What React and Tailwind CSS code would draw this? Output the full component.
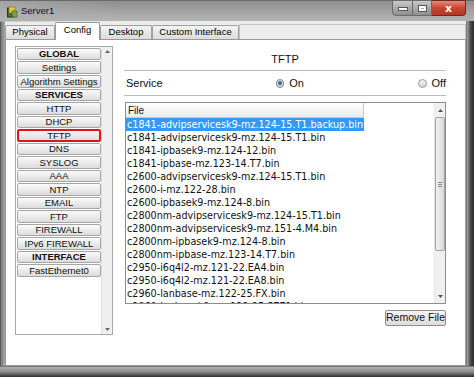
import React from "react";

const navItems = [
  { t: "GLOBAL", b: true, h: 13 },
  { t: "Settings", h: 14 },
  { t: "Algorithm Settings", h: 14 },
  { t: "SERVICES", b: true, h: 13 },
  { t: "HTTP", h: 14 },
  { t: "DHCP", h: 13 },
  { t: "TFTP", h: 14, sel: true },
  { t: "DNS", h: 13 },
  { t: "SYSLOG", h: 14 },
  { t: "AAA", h: 13 },
  { t: "NTP", h: 14 },
  { t: "EMAIL", h: 13 },
  { t: "FTP", h: 14 },
  { t: "FIREWALL", h: 13 },
  { t: "IPv6 FIREWALL", h: 14 },
  { t: "INTERFACE", b: true, h: 13 },
  { t: "FastEthernet0", h: 14 },
];

const files = [
  "c1841-advipservicesk9-mz.124-15.T1.backup.bin",
  "c1841-advipservicesk9-mz.124-15.T1.bin",
  "c1841-ipbasek9-mz.124-12.bin",
  "c1841-ipbase-mz.123-14.T7.bin",
  "c2600-advipservicesk9-mz.124-15.T1.bin",
  "c2600-i-mz.122-28.bin",
  "c2600-ipbasek9-mz.124-8.bin",
  "c2800nm-advipservicesk9-mz.124-15.T1.bin",
  "c2800nm-advipservicesk9-mz.151-4.M4.bin",
  "c2800nm-ipbasek9-mz.124-8.bin",
  "c2800nm-ipbase-mz.123-14.T7.bin",
  "c2950-i6q4l2-mz.121-22.EA4.bin",
  "c2950-i6q4l2-mz.121-22.EA8.bin",
  "c2960-lanbase-mz.122-25.FX.bin",
  "c2960-lanbasek9-mz.122-25.SEE1.bin",
];

function Tab({ label, w, selected }) {
  if (selected) {
    return (
      <div
        className={`${w} h-[18px] mb-[-1px] relative z-10 bg-white border border-b-0 border-[#9a9a9a] rounded-t-[2px] flex items-center justify-center pb-[2px] text-[9.5px] text-black`}
      >
        {label}
      </div>
    );
  }
  return (
    <div
      className={`${w} h-[14px] bg-gradient-to-b from-[#f4f4f4] to-[#dcdcdc] border border-b-0 border-[#a0a0a0] rounded-t-[2px] flex items-center justify-center text-[9.5px] text-black`}
    >
      {label}
    </div>
  );
}

export default function App() {
  return (
    <div
      className="w-[474px] h-[377px] flex flex-col overflow-hidden bg-[#8a8a8a]"
      style={{ fontFamily: '"Liberation Sans", Arial, sans-serif' }}
    >
      {/* Title bar */}
      <div className="h-[21px] relative flex items-center bg-gradient-to-b from-[#8d8d8d] via-[#a3a3a3] to-[#b4b4b4] border-t border-[#6a6a6a]">
        <div className="absolute left-0 top-0 w-[120px] h-[21px] bg-gradient-to-r from-[#b2b2b2] to-transparent opacity-60" />
        <svg className="relative ml-[7px] mt-[1px]" width="11" height="12" viewBox="0 0 11 12">
          <rect x="0.5" y="2" width="7" height="9" fill="#3b6e2a" stroke="#1e3d14" />
          <rect x="2" y="1" width="6" height="6" fill="#e8c83a" stroke="#8a6b12" strokeWidth="0.6" />
          <rect x="5" y="5" width="5" height="6" fill="#6fa84a" stroke="#2f5a1c" strokeWidth="0.6" />
          <circle cx="3" cy="9" r="1" fill="#c83a2a" />
        </svg>
        <span className="relative ml-[3px] mt-[1px] text-[9.5px] text-[#111]">Server1</span>
        {/* window controls */}
        <div className="absolute top-[-1px] right-[8px] flex h-[16px]">
          <div className="w-[21px] h-[16px] bg-gradient-to-b from-[#c8c8c8] to-[#8e8e8e] border border-[#6a6a6a] rounded-bl-[4px] flex items-end justify-center pb-[4px]">
            <div className="w-[8px] h-[2px] bg-white border border-[#555] box-content" />
          </div>
          <div className="w-[19px] h-[16px] bg-gradient-to-b from-[#c8c8c8] to-[#8e8e8e] border border-l-0 border-[#6a6a6a] flex items-center justify-center">
            <div className="w-[7px] h-[5px] border-2 border-white outline outline-1 outline-[#555]" />
          </div>
          <div className="w-[34px] h-[16px] bg-gradient-to-b from-[#e0897a] via-[#c9452f] to-[#b53722] border border-l-0 border-[#6b2a1e] rounded-br-[4px] flex items-center justify-center">
            <span className="text-white text-[11px] font-bold leading-none" style={{ fontFamily: '"DejaVu Sans", sans-serif' }}>
              x
            </span>
          </div>
        </div>
      </div>

      {/* Middle */}
      <div className="flex h-[345px]">
        <div className="w-[5px] bg-gradient-to-r from-[#7a7a7a] to-[#a8a8a8] border-l border-[#5a5a5a]" />
        <div className="w-[461px] flex flex-col bg-[#ececec]">
          {/* Tabs row */}
          <div className="h-[18px] flex items-end">
            <Tab label="Physical" w="w-[50px]" />
            <Tab label="Config" w="w-[45px]" selected />
            <Tab label="Desktop" w="w-[52px]" />
            <Tab label="Custom Interface" w="w-[87px]" />
            <div className="flex-1 h-[15px] bg-[#ededed] border border-b-0 border-[#c4c4c4]" />
          </div>
          {/* White panel */}
          <div className="flex-1 bg-white border border-[#9a9a9a] flex pl-[9px] pt-[6px]">
            {/* Nav */}
            <div className="w-[98px] h-[289px] border border-[#a8a8a8] flex">
              <div className="w-[85px] pt-[1px] pl-[1px] flex flex-col">
                {navItems.map((it) => (
                  <div
                    key={it.t}
                    style={{ height: it.h }}
                    className="pb-[1px]"
                  >
                    <div
                      className={`h-full ${
                        it.sel
                          ? "border-2 border-[#e0141c] bg-gradient-to-b from-[#f6f6f6] to-[#dedede]"
                          : "border border-[#a6a6a6] bg-gradient-to-b from-[#fbfbfb] to-[#dcdcdc]"
                      } rounded-[2px] flex items-center justify-center text-[9.5px] leading-none text-[#111] ${
                        it.b ? "font-bold" : ""
                      }`}
                    >
                      {it.t}
                    </div>
                  </div>
                ))}
              </div>
              <div className="flex-1 bg-[#efefef] border-l border-[#e0e0e0] flex flex-col justify-between items-center py-[3px]">
                <svg width="5" height="3" viewBox="0 0 5 3">
                  <path d="M0 3 L2.5 0 L5 3 Z" fill="#666" />
                </svg>
                <svg width="5" height="3" viewBox="0 0 5 3">
                  <path d="M0 0 L2.5 3 L5 0 Z" fill="#666" />
                </svg>
              </div>
            </div>

            {/* Right panel */}
            <div className="ml-[11px] w-[322px] flex flex-col">
              <div className="h-[25px] border-b border-[#bcbcbc] flex items-center justify-center pt-[3px] text-[11px] text-[#111]">
                TFTP
              </div>
              <div className="h-[25px] border-b border-[#bcbcbc] flex items-center text-[11px] text-[#111]">
                <span className="ml-[2px]">Service</span>
                <div className="ml-[113px] w-[9px] h-[9px] rounded-full border border-[#8a8a8a] bg-gradient-to-b from-[#e8eef4] to-[#c4ccd4] flex items-center justify-center">
                  <div className="w-[4px] h-[4px] rounded-full bg-[#2a6aa8]" />
                </div>
                <span className="ml-[5px]">On</span>
                <div className="ml-[114px] w-[9px] h-[9px] rounded-full border border-[#9a9a9a] bg-gradient-to-b from-[#f4f4f4] to-[#d6d6d6]" />
                <span className="ml-[5px]">Off</span>
              </div>
              {/* File list */}
              <div className="mt-[6px] ml-[1px] w-[321px] h-[202px] border border-[#8c8c8c] flex">
                <div className="w-[308px] flex flex-col overflow-hidden">
                  <div className="h-[15px] flex shrink-0">
                    <div className="w-[238px] h-[15px] bg-gradient-to-b from-[#ffffff] to-[#ebebeb] border-r border-b border-[#c8c8c8] text-[10px] text-[#111] flex items-center pl-[2px]">
                      File
                    </div>
                  </div>
                  <div
                    className="flex flex-col overflow-hidden text-[9.6px]"
                    style={{ fontFamily: '"DejaVu Sans", Verdana, sans-serif' }}
                  >
                    {files.map((f, i) => (
                      <div
                        key={f}
                        className={`h-[13px] shrink-0 w-[238px] whitespace-nowrap leading-[13px] pl-[1px] ${
                          i === 0 ? "bg-[#3399ff] text-white" : "text-[#111]"
                        }`}
                      >
                        {f}
                      </div>
                    ))}
                  </div>
                </div>
                {/* scrollbar */}
                <div className="flex-1 bg-[#f0f0f0] flex flex-col items-center border-l border-[#e6e6e6]">
                  <div className="h-[14px] flex items-center justify-center">
                    <svg width="5" height="3" viewBox="0 0 5 3">
                      <path d="M0 3 L2.5 0 L5 3 Z" fill="#555" />
                    </svg>
                  </div>
                  <div className="w-[10px] h-[134px] rounded-[2px] border border-[#a4a4a4] bg-gradient-to-r from-[#f2f2f2] to-[#d8d8d8] flex flex-col items-center justify-center gap-[1px]">
                    <div className="w-[4px] h-px bg-[#8a8a8a]" />
                    <div className="w-[4px] h-px bg-[#8a8a8a]" />
                    <div className="w-[4px] h-px bg-[#8a8a8a]" />
                  </div>
                  <div className="flex-1" />
                  <div className="h-[14px] flex items-center justify-center">
                    <svg width="5" height="3" viewBox="0 0 5 3">
                      <path d="M0 0 L2.5 3 L5 0 Z" fill="#555" />
                    </svg>
                  </div>
                </div>
              </div>
              <div className="mt-[6px] self-end w-[61px] h-[16px] border border-[#8e8e8e] rounded-[2px] bg-gradient-to-b from-[#f6f6f6] to-[#dcdcdc] flex items-center justify-center text-[10.5px] text-[#111]">
                Remove File
              </div>
            </div>
          </div>
        </div>
        <div className="w-[8px] bg-gradient-to-r from-[#a4a4a4] via-[#4a4a4a] to-[#2a2a2a] border-l border-[#7a7a7a]" />
      </div>

      {/* Bottom frame */}
      <div className="h-[11px] bg-gradient-to-b from-[#b0b0b0] via-[#8a8a8a] to-[#2e2e2e] border-t border-[#777]" />
    </div>
  );
}
